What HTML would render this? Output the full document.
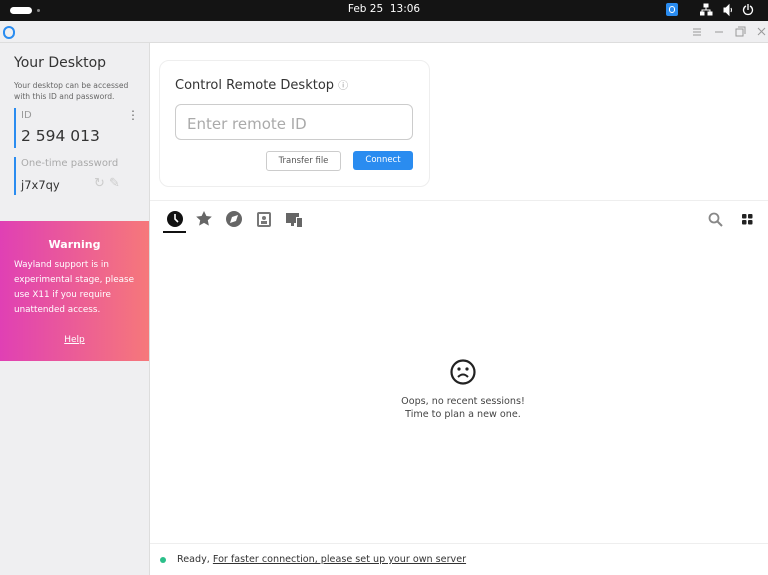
<!DOCTYPE html><html><head><style>
body{margin:0;width:768px;height:575px;overflow:hidden;font-family:"DejaVu Sans","Liberation Sans",sans-serif;background:#fff;position:relative}
.a{position:absolute}
</style></head><body>
<div class="a" style="left:0;top:0;width:768px;height:21px;background:#141414"></div>
<div class="a" style="left:10px;top:7px;width:22px;height:7px;border-radius:4px;background:#fff"></div>
<div class="a" style="left:37px;top:9px;width:3px;height:3px;border-radius:2px;background:#888"></div>
<div class="a" style="left:0;top:3px;width:768px;text-align:center;color:#fff;font-size:10.5px">Feb 25&nbsp; 13:06</div>
<div class="a" style="left:666px;top:3px;width:12px;height:13px;background:#2a8cf0;border-radius:2px"></div>
<div class="a" style="left:669px;top:6px;width:4px;height:5px;border:1.5px solid #fff;border-radius:4px"></div>
<svg class="a" style="left:700px;top:3px" width="60" height="14"><g fill="#fff" stroke="#fff"><rect x="4" y="1" width="4" height="3"/><rect x="0" y="9" width="4" height="3"/><rect x="8" y="9" width="4" height="3"/><path d="M6 4v3M2 9V7h8v2" fill="none"/><path d="M24 5h2l3-3v10l-3-3h-2z"/><path d="M31 5q1 2 0 4" fill="none"/><path d="M46 3a4.5 4.5 0 1 0 4 0M48 1v6" fill="none" stroke-width="1.3"/></g></svg>
<div class="a" style="left:0;top:21px;width:768px;height:21px;background:#efeff1;border-bottom:1px solid #ddd"></div>
<div class="a" style="left:3px;top:26px;width:8px;height:9px;border:2px solid #2a8cf0;border-radius:6px"></div>
<svg class="a" style="left:690px;top:26px" width="76" height="12"><g stroke="#999" fill="none"><path d="M3 3h8M3 6h8M3 9h8M25 6h8"/><rect x="46" y="3" width="7" height="7"/><path d="M48 1h7v7"/><path d="M68 2l7 7M75 2l-7 7"/></g></svg>
<div class="a" style="left:0;top:43px;width:149px;height:532px;background:#efeff1;border-right:1px solid #ddd"></div>
<div class="a" style="left:14px;top:55px;font-size:14px;color:#333">Your Desktop</div>
<div class="a" style="left:14px;top:80px;font-size:7.6px;color:#666;line-height:11px">Your desktop can be accessed<br>with this ID and password.</div>
<div class="a" style="left:14px;top:108px;width:2px;height:40px;background:#2a8cf0"></div>
<div class="a" style="left:21px;top:110px;font-size:10px;color:#999">ID</div>
<div class="a" style="left:127px;top:108px;font-size:12px;color:#666">⋮</div>
<div class="a" style="left:21px;top:127px;font-size:15.5px;color:#333">2 594 013</div>
<div class="a" style="left:14px;top:157px;width:2px;height:38px;background:#2a8cf0"></div>
<div class="a" style="left:21px;top:158px;font-size:10px;color:#aaa">One-time password</div>
<div class="a" style="left:21px;top:178px;font-size:11.5px;color:#333">j7x7qy</div>
<div class="a" style="left:94px;top:176px;font-size:13px;color:#ccc">↻ ✎</div>
<div class="a" style="left:0;top:221px;width:149px;height:140px;background:linear-gradient(90deg,#e040b4,#f6787a)"></div>
<div class="a" style="left:0;top:238px;width:149px;text-align:center;font-size:11px;font-weight:bold;color:#fff">Warning</div>
<div class="a" style="left:14px;top:258px;font-size:8.8px;color:#fff;line-height:15px">Wayland support is in<br>experimental stage, please<br>use X11 if you require<br>unattended access.</div>
<div class="a" style="left:0;top:335px;width:149px;text-align:center;font-size:9px;color:#fff;text-decoration:underline">Help</div>
<div class="a" style="left:159px;top:60px;width:269px;height:125px;border:1px solid #eee;border-radius:10px"></div>
<div class="a" style="left:175px;top:77px;font-size:13px;color:#333">Control Remote Desktop <span style="font-size:10px;color:#999">ⓘ</span></div>
<div class="a" style="left:175px;top:104px;width:236px;height:34px;border:1px solid #ccc;border-radius:6px"></div>
<div class="a" style="left:187px;top:115px;font-size:15px;color:#aaa">Enter remote ID</div>
<div class="a" style="left:266px;top:151px;width:73px;height:18px;border:1px solid #ccc;border-radius:3px;font-size:8.5px;color:#555;text-align:center;line-height:18px">Transfer file</div>
<div class="a" style="left:353px;top:151px;width:60px;height:19px;background:#2a8cf0;border-radius:3px;font-size:8.5px;color:#fff;text-align:center;line-height:19px">Connect</div>
<div class="a" style="left:150px;top:200px;width:618px;height:1px;background:#eee"></div>
<svg class="a" style="left:160px;top:207px" width="150" height="28">
<circle cx="15" cy="12" r="8" fill="#111"/><path d="M15 7v5l3 3" stroke="#fff" stroke-width="1.6" fill="none"/>
<rect x="3" y="24" width="23" height="2" fill="#111"/>
<path d="M44 4l2.4 5 5.4.6-4 3.7 1.1 5.3-4.9-2.7-4.9 2.7 1.1-5.3-4-3.7 5.4-.6z" fill="#666"/>
<circle cx="74" cy="12" r="8" fill="#666"/><path d="M78 8l-6 2-2 6 6-2z" fill="#fff"/>
<rect x="97" y="5" width="14" height="15" rx="2" fill="#777"/><rect x="99" y="7" width="10" height="11" fill="#fff"/><circle cx="104" cy="11" r="2" fill="#777"/><rect x="101" y="14" width="6" height="3" fill="#777"/>
<rect x="126" y="6" width="13" height="10" fill="#666"/><rect x="131" y="16" width="3" height="3" fill="#666"/><rect x="136" y="10" width="6" height="10" fill="#fff"/><rect x="137" y="11" width="5" height="9" fill="#666"/>
</svg>
<svg class="a" style="left:708px;top:212px" width="16" height="16"><circle cx="6" cy="6" r="4.5" stroke="#888" stroke-width="1.8" fill="none"/><path d="M9 9l5 5" stroke="#888" stroke-width="2"/></svg>
<svg class="a" style="left:742px;top:214px" width="12" height="12"><g fill="#222"><rect x="0" y="0" width="4.5" height="4.5" rx="1"/><rect x="6" y="0" width="4.5" height="4.5" rx="1"/><rect x="0" y="6" width="4.5" height="4.5" rx="1"/><rect x="6" y="6" width="4.5" height="4.5" rx="1"/></g></svg>
<svg class="a" style="left:449px;top:358px" width="28" height="28"><circle cx="14" cy="14" r="11.5" stroke="#222" stroke-width="2.2" fill="none"/><circle cx="10" cy="11" r="1.6" fill="#222"/><circle cx="18" cy="11" r="1.6" fill="#222"/><path d="M9 19q5-5 10 0" stroke="#222" stroke-width="2" fill="none"/></svg>
<div class="a" style="left:150px;top:395px;width:626px;text-align:center;font-size:9.6px;color:#444;line-height:13px">Oops, no recent sessions!<br>Time to plan a new one.</div>
<div class="a" style="left:150px;top:543px;width:618px;height:1px;background:#eee"></div>
<div class="a" style="left:160px;top:557px;width:6px;height:6px;border-radius:3px;background:#2bbf8a"></div>
<div class="a" style="left:177px;top:554px;font-size:9.6px;color:#333">Ready, <span style="text-decoration:underline">For faster connection, please set up your own server</span></div>
</body></html>
